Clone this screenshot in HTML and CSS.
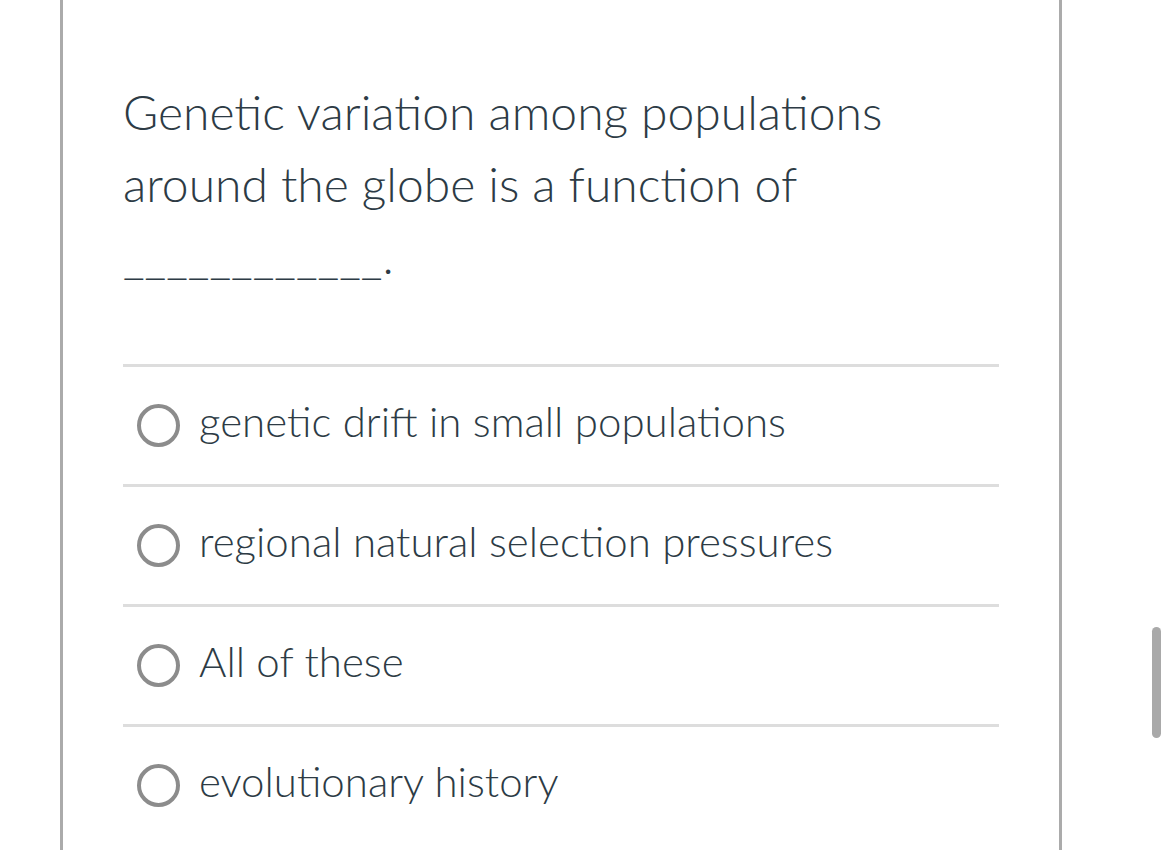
FILE: index.html
```html
<!DOCTYPE html>
<html lang="en">
<head>
<meta charset="utf-8">
<title>Quiz question</title>
<link rel="stylesheet" href="styles.css">
</head>
<body>
<div class="page">
  <main class="card">
    <p class="question">Genetic variation among populations around the globe is a function of ____________.</p>
    <ul class="answers">
      <li class="answer"><span class="radio"></span><span class="label">genetic drift in small populations</span></li>
      <li class="answer"><span class="radio"></span><span class="label">regional natural selection pressures</span></li>
      <li class="answer"><span class="radio"></span><span class="label">All of these</span></li>
      <li class="answer"><span class="radio"></span><span class="label">evolutionary history</span></li>
    </ul>
  </main>
  <div class="scrollbar"><div class="thumb"></div></div>
</div>
</body>
</html>
```
FILE: styles.css
```css
html, body {
  margin: 0;
  padding: 0;
  background: #ffffff;
  height: 100%;
  overflow: hidden;
}
body {
  font-family: Lato, "Open Sans", sans-serif;
  font-weight: 300;
  color: #2d3b45;
}
.page {
  display: flex;
  height: 850px;
  position: relative;
}
.card {
  margin-left: 60px;
  width: 876px;
  padding: 0 60px;
  border-left: 3px solid #ababab;
  border-right: 3px solid #ababab;
  height: 850px;
}
.question {
  margin: 76px 0 72px 0;
  font-size: 48px;
  line-height: 72px;
  font-weight: 300;
  width: 800px;
}
.answers {
  list-style: none;
  margin: 0;
  padding: 0;
}
.answer {
  display: flex;
  align-items: center;
  height: 117px;
  border-top: 3px solid #dddddd;
}
.radio {
  box-sizing: border-box;
  width: 43px;
  height: 43px;
  border: 4.5px solid #8c8c8c;
  border-radius: 50%;
  margin-left: 14px;
  margin-right: 19px;
  flex: none;
}
.label {
  font-size: 42px;
  line-height: 60px;
  margin-bottom: 10px;
}
.scrollbar {
  position: absolute;
  right: 9px;
  top: 627px;
}
.thumb {
  width: 9px;
  height: 111px;
  border-radius: 5px;
  background: #a9a9a9;
}
```
